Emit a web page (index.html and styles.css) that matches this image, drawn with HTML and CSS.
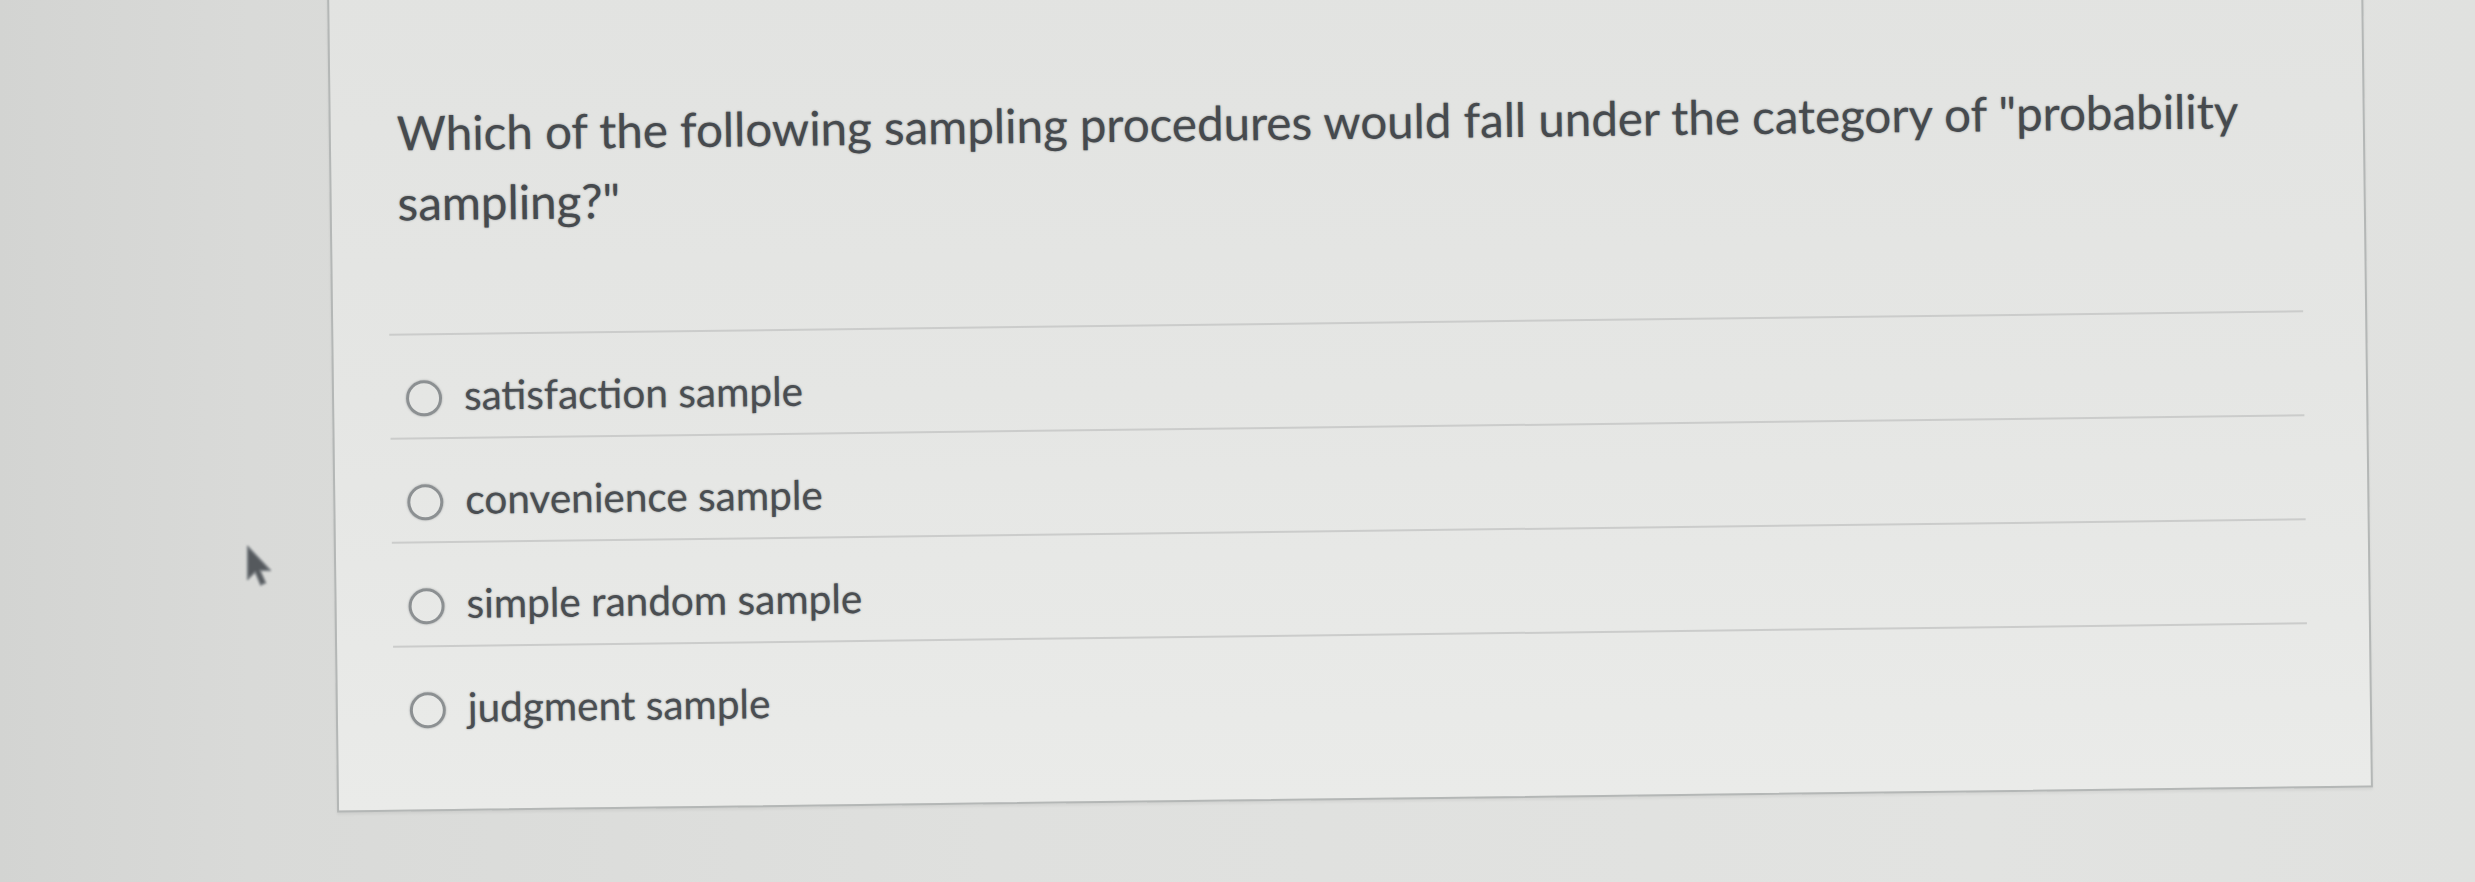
FILE: index.html
```html
<!DOCTYPE html>
<html lang="en">
<head>
<meta charset="utf-8">
<title>Quiz question</title>
<link rel="stylesheet" href="styles.css">
</head>
<body>
<div class="screen">
  <div class="card">
    <p class="question">Which of the following sampling procedures would fall under the category of "probability sampling?"</p>
    <ul class="options">
      <li class="option"><span class="radio"></span><span class="label">satisfaction sample</span></li>
      <li class="option"><span class="radio"></span><span class="label">convenience sample</span></li>
      <li class="option"><span class="radio"></span><span class="label">simple random sample</span></li>
      <li class="option"><span class="radio"></span><span class="label">judgment sample</span></li>
    </ul>
  </div>
  <svg class="cursor" width="28" height="44" viewBox="0 0 20 32" aria-hidden="true">
    <path d="M1 1 L1 25 L6.5 19.5 L10.5 29 L14 27.5 L10 18.5 L17.5 18.5 Z" fill="#55595d" stroke="#7d8286" stroke-width="1.2" stroke-linejoin="round"/>
  </svg>
</div>
</body>
</html>
```

FILE: styles.css
```css
html, body {
  margin: 0;
  padding: 0;
  width: 2475px;
  height: 882px;
  overflow: hidden;
}

body {
  background: linear-gradient(90deg, #d3d4d2 0%, #d9dad8 10%, #dfe0de 40%, #e2e3e1 80%, #e0e1df 100%);
  font-family: Lato, "Open Sans", "Liberation Sans", sans-serif;
}

.screen {
  position: relative;
  width: 2475px;
  height: 882px;
  display: flex;
  align-items: flex-start;
  padding-left: 332px;
  box-sizing: border-box;
}

.card {
  width: 2036px;
  height: 822px;
  margin-top: -22px;
  box-sizing: border-box;
  border: 2px solid #b4b7b6;
  background: linear-gradient(180deg, #e2e3e1 0%, #e5e6e4 50%, #eaebe9 100%);
  padding: 106px 62px 0 56px;
  transform: rotate(-0.7deg);
  transform-origin: 50% 50%;
  box-shadow: 0 2px 3px rgba(0, 0, 0, 0.06);
}

.question {
  margin: 0 0 0 10px;
  font-size: 47.5px;
  line-height: 70px;
  color: #464a4e;
  text-shadow: 0 0 2px rgba(60, 64, 68, 0.55);
  max-width: 1900px;
}

.options {
  list-style: none;
  margin: 96px 0 0 0;
  padding: 0;
}

.option {
  display: flex;
  align-items: center;
  gap: 22px;
  border-top: 2px solid #cbcccb;
  padding: 36px 0 18px 16px;
  height: 48px;
}

.radio {
  width: 30px;
  height: 30px;
  border: 3px solid #8c9092;
  border-radius: 50%;
  flex: none;
  margin-top: 6px;
  box-shadow: 0 0 2px rgba(90, 94, 98, 0.5);
}

.label {
  font-size: 40.5px;
  line-height: 48px;
  color: #4a4e52;
  text-shadow: 0 0 2px rgba(60, 64, 68, 0.55);
}

.cursor {
  position: absolute;
  left: 246px;
  top: 545px;
  filter: blur(1px);
}
```
